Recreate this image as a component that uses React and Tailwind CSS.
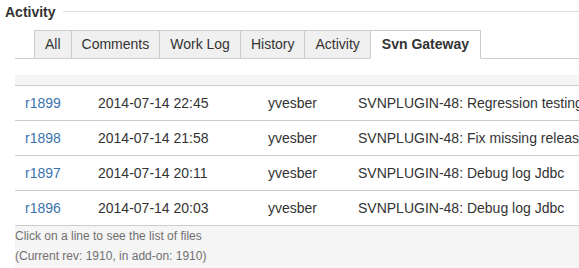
import React from "react";

const tabs = ["All", "Comments", "Work Log", "History", "Activity", "Svn Gateway"];

const rows = [
  { rev: "r1899", date: "2014-07-14 22:45", user: "yvesber", msg: "SVNPLUGIN-48: Regression testing of the plugin" },
  { rev: "r1898", date: "2014-07-14 21:58", user: "yvesber", msg: "SVNPLUGIN-48: Fix missing release notes" },
  { rev: "r1897", date: "2014-07-14 20:11", user: "yvesber", msg: "SVNPLUGIN-48: Debug log Jdbc" },
  { rev: "r1896", date: "2014-07-14 20:03", user: "yvesber", msg: "SVNPLUGIN-48: Debug log Jdbc" },
];

export default function App() {
  return (
    <div className="w-[579px] h-[268px] overflow-hidden bg-white text-[#333] font-['Liberation_Sans',Arial,sans-serif]">
      <div className="flex items-center pl-[5px] pt-[3px] h-[20px]">
        <h2 className="text-[14px] font-bold leading-none text-[#333]">Activity</h2>
        <div className="flex-1 h-px bg-[#ddd] ml-[7px]" />
      </div>

      <div className="ml-[15px] mt-[10px] flex pl-[19px] border-b border-[#ccc] h-[29px]">
        {tabs.map((t, i) => {
          const active = i === tabs.length - 1;
          return (
            <div
              key={t}
              className={
                active
                  ? "h-[29px] px-[11px] flex items-center text-[14px] font-bold bg-white border border-[#ccc] border-b-white -mb-px"
                  : "h-[28px] px-[10px] flex items-center text-[14px] bg-[#f0f0f0] border-t border-l border-[#ccc]"
              }
            >
              {t}
            </div>
          );
        })}
      </div>

      <div className="ml-[15px] mt-[16px] text-[14px]">
        <div className="h-[11px] bg-[#f5f5f5] border-b border-[#ccc]" />
        {rows.map((r) => (
          <div key={r.rev} className="flex items-center h-[35px] border-b border-[#ccc] whitespace-nowrap">
            <div className="w-[83px] shrink-0 pl-[10px] text-[#3b73af]">{r.rev}</div>
            <div className="w-[170px] shrink-0">{r.date}</div>
            <div className="w-[90px] shrink-0">{r.user}</div>
            <div className="shrink-0">{r.msg}</div>
          </div>
        ))}
        <div className="bg-[#f5f5f5] text-[12px] text-[#707070] leading-[20px] h-[60px]">
          <div>Click on a line to see the list of files</div>
          <div>(Current rev: 1910, in add-on: 1910)</div>
        </div>
      </div>
    </div>
  );
}
